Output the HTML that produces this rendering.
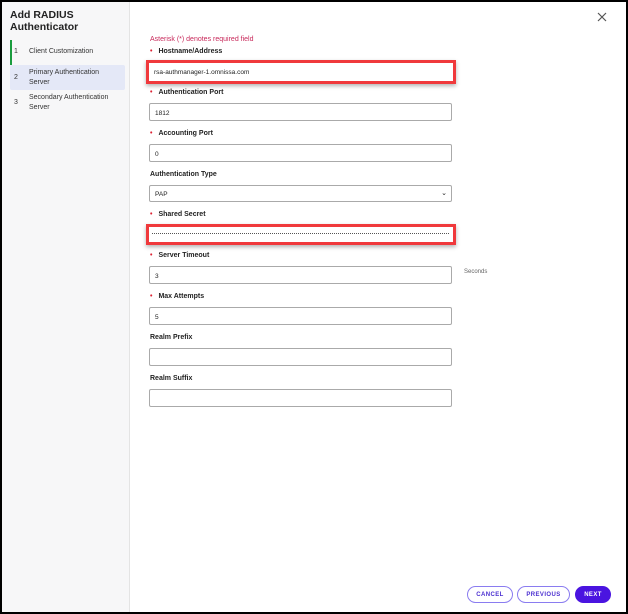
<!DOCTYPE html><html><head><style>
*{box-sizing:border-box;margin:0;padding:0}
body{width:628px;height:614px;background:#000;font-family:"Liberation Sans",sans-serif;position:relative;overflow:hidden}
.main{position:absolute;left:2px;top:2px;width:624px;height:610px;background:#fff}
.side{position:absolute;left:0;top:0;width:128px;height:610px;background:#f7f7f8;border-right:1px solid #e4e4e4}
.t{position:absolute;left:8px;top:8px;font-size:10.5px;font-weight:bold;color:#222;line-height:11.5px}
.it{position:absolute;left:8px;width:115px;font-size:7px;color:#333;line-height:10px}
.it b{position:absolute;left:4px;font-weight:normal}
.it span{position:absolute;left:19px}
.lbl{position:absolute;left:148px;font-size:7px;font-weight:bold;color:#222}
.lbl i{color:#d23;font-style:normal;margin-right:6px}
.in{position:absolute;left:147px;width:303px;height:18px;border:1px solid #aaa;border-radius:2px;font-size:6.5px;color:#222;padding:6px 5px;background:#fff}
.red{position:absolute;border:3px solid #f0393c;box-shadow:0 2px 4px rgba(0,0,0,.3)}
.btn{position:absolute;top:584px;height:17px;border:1px solid #8a7cf0;border-radius:9px;font-size:6px;font-weight:bold;color:#4a2fd0;display:flex;align-items:center;justify-content:center;letter-spacing:.4px;background:#fff}
</style></head><body><div class="main">
<div class="side">
<div class="t">Add RADIUS<br>Authenticator</div>
<div style="position:absolute;left:8px;top:38px;width:2px;height:25px;background:#1a9c3e"></div>
<div class="it" style="top:45px"><b>1</b><span>Client Customization</span></div>
<div style="position:absolute;left:8px;top:63px;width:115px;height:25px;background:#e4e8f7;border-radius:2px"></div>
<div class="it" style="top:66px"><span>Primary Authentication<br>Server</span><b style="top:5px">2</b></div>
<div class="it" style="top:91px"><span>Secondary Authentication<br>Server</span><b style="top:5px">3</b></div>
</div>
<svg style="position:absolute;left:595px;top:10px" width="10" height="10" viewBox="0 0 10 10"><path d="M1 1L9 9M9 1L1 9" stroke="#555" stroke-width="1.2"/></svg>
<div style="position:absolute;left:148px;top:34px;font-size:7px;color:#c8285a">Asterisk (*) denotes required field</div>
<div class="lbl" style="top:46px"><i>•</i>Hostname/Address</div>
<div class="red" style="left:144px;top:58px;width:310px;height:24px"></div>
<div class="in" style="top:61px;border:none;background:transparent">rsa-authmanager-1.omnissa.com</div>
<div class="lbl" style="top:87px"><i>•</i>Authentication Port</div>
<div class="in" style="top:101px">1812</div>
<div class="lbl" style="top:128px"><i>•</i>Accounting Port</div>
<div class="in" style="top:142px">0</div>
<div class="lbl" style="top:169px">Authentication Type</div>
<div class="in" style="top:183px;height:17px;padding:5px">PAP<span style="position:absolute;right:4px;top:3px;font-size:7px">⌄</span></div>
<div class="lbl" style="top:209px"><i>•</i>Shared Secret</div>
<div class="red" style="left:144px;top:222px;width:310px;height:21px"></div>
<div style="position:absolute;left:150px;top:231px;width:297px;border-top:1px dotted #555"></div>
<div class="lbl" style="top:250px"><i>•</i>Server Timeout</div>
<div class="in" style="top:264px">3</div>
<div style="position:absolute;left:462px;top:267px;font-size:6px;color:#666">Seconds</div>
<div class="lbl" style="top:291px"><i>•</i>Max Attempts</div>
<div class="in" style="top:305px">5</div>
<div class="lbl" style="top:332px">Realm Prefix</div>
<div class="in" style="top:346px"></div>
<div class="lbl" style="top:373px">Realm Suffix</div>
<div class="in" style="top:387px"></div>
<div class="btn" style="left:465px;width:46px">CANCEL</div>
<div class="btn" style="left:515px;width:53px">PREVIOUS</div>
<div class="btn" style="left:573px;width:36px;background:#4a14e0;color:#fff;border-color:#4a14e0">NEXT</div>
</div></body></html>
